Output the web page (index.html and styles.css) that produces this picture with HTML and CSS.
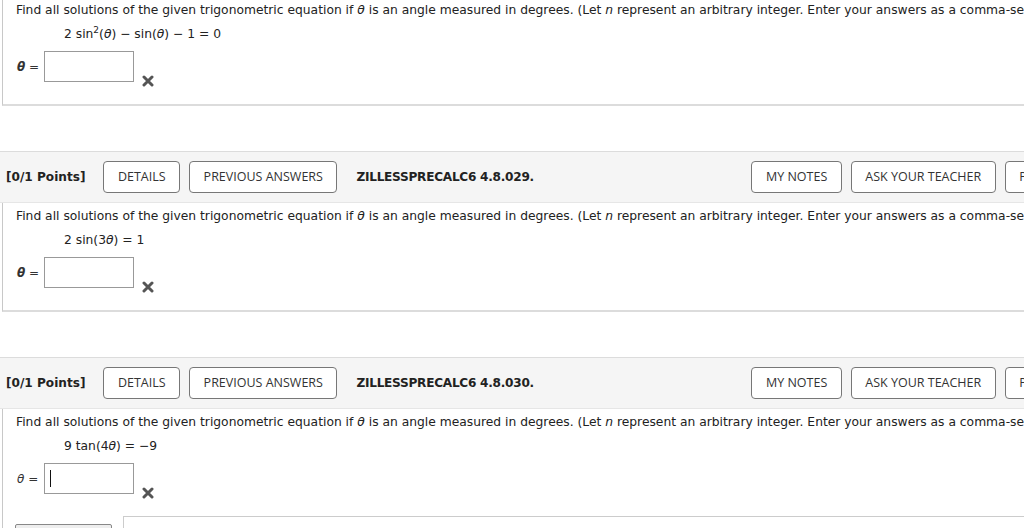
FILE: index.html
```html
<!DOCTYPE html>
<html lang="en">
<head>
<meta charset="utf-8">
<title>Questions</title>
<link rel="stylesheet" href="styles.css">
</head>
<body>
<div class="page">

  <section class="q q-first">
    <div class="qbody">
      <p class="prompt">Find all solutions of the given trigonometric equation if <i>θ</i> is an angle measured in degrees. (Let <i>n</i> represent an arbitrary integer. Enter your answers as a comma-separated list.)</p>
      <p class="eq">2 sin<sup>2</sup>(<i>θ</i>) − sin(<i>θ</i>) − 1 = 0</p>
      <div class="answer">
        <span class="lbl"><b><i>θ</i></b> =</span>
        <span class="box"></span>
        <svg class="wrong" viewBox="0 0 12 12" width="12" height="12"><path d="M2 2 L10 10 M10 2 L2 10" stroke="#555" stroke-width="3" stroke-linecap="round"/></svg>
      </div>
    </div>
  </section>

  <section class="q">
    <div class="qhead">
      <span class="pts">[0/1 Points]</span>
      <span class="btn">DETAILS</span>
      <span class="btn">PREVIOUS ANSWERS</span>
      <span class="qid">ZILLESSPRECALC6 4.8.029.</span>
      <span class="right">
        <span class="btn">MY NOTES</span>
        <span class="btn">ASK YOUR TEACHER</span>
        <span class="btn">PRACTICE ANOTHER</span>
      </span>
    </div>
    <div class="qbody">
      <p class="prompt">Find all solutions of the given trigonometric equation if <i>θ</i> is an angle measured in degrees. (Let <i>n</i> represent an arbitrary integer. Enter your answers as a comma-separated list.)</p>
      <p class="eq">2 sin(3<i>θ</i>) = 1</p>
      <div class="answer">
        <span class="lbl"><b><i>θ</i></b> =</span>
        <span class="box"></span>
        <svg class="wrong" viewBox="0 0 12 12" width="12" height="12"><path d="M2 2 L10 10 M10 2 L2 10" stroke="#555" stroke-width="3" stroke-linecap="round"/></svg>
      </div>
    </div>
  </section>

  <section class="q">
    <div class="qhead">
      <span class="pts">[0/1 Points]</span>
      <span class="btn">DETAILS</span>
      <span class="btn">PREVIOUS ANSWERS</span>
      <span class="qid">ZILLESSPRECALC6 4.8.030.</span>
      <span class="right">
        <span class="btn">MY NOTES</span>
        <span class="btn">ASK YOUR TEACHER</span>
        <span class="btn">PRACTICE ANOTHER</span>
      </span>
    </div>
    <div class="qbody">
      <p class="prompt">Find all solutions of the given trigonometric equation if <i>θ</i> is an angle measured in degrees. (Let <i>n</i> represent an arbitrary integer. Enter your answers as a comma-separated list.)</p>
      <p class="eq">9 tan(4<i>θ</i>) = −9</p>
      <div class="answer">
        <span class="lbl"><i>θ</i> =</span>
        <span class="box focus"><span class="caret"></span></span>
        <svg class="wrong" viewBox="0 0 12 12" width="12" height="12"><path d="M2 2 L10 10 M10 2 L2 10" stroke="#555" stroke-width="3" stroke-linecap="round"/></svg>
      </div>
      <div class="tools">
        <span class="tbtn"></span>
        <span class="tbox"></span>
      </div>
    </div>
  </section>

</div>
</body>
</html>
```

FILE: styles.css
```css
html, body {
  margin: 0;
  padding: 0;
  overflow: hidden;
  background: #fff;
}
body {
  font-family: "DejaVu Sans", Verdana, sans-serif;
  font-size: 12.3px;
  color: #222;
}
.page {
  width: 1159px;
}
.q {
  margin-bottom: 45px;
}
.q-first {
  margin-top: -3px;
}
.qhead {
  display: flex;
  align-items: center;
  gap: 9px;
  height: 50px;
  padding: 0 0 0 6px;
  background: #f5f5f5;
  border-top: 1px solid #dcdcdc;
  border-bottom: 1px solid #e6e6e6;
}
.pts {
  font-weight: bold;
  font-size: 12.1px;
  margin-right: 9px;
}
.qid {
  font-weight: bold;
  font-size: 12.1px;
  margin-left: 10px;
  letter-spacing: -0.25px;
}
.right {
  margin-left: auto;
  display: flex;
  gap: 9px;
  padding-right: 8px;
}
.btn {
  font-family: "Open Sans", sans-serif;
  font-size: 12.5px;
  color: #333;
  background: #fff;
  border: 1px solid #777;
  border-radius: 4px;
  height: 30px;
  line-height: 30px;
  padding: 0 13.5px;
  white-space: nowrap;
}
.qbody {
  margin-left: 2px;
  border-left: 1px solid #c8c8c8;
  border-bottom: 2px solid #dcdcdc;
  padding: 4px 0 22px 13px;
}
.prompt {
  margin: 0;
  line-height: 18px;
  white-space: nowrap;
}
.eq {
  margin: 6px 0 0 48px;
  line-height: 18px;
}
.eq sup {
  font-size: 9px;
  line-height: 0;
}
.answer {
  display: flex;
  align-items: center;
  margin-top: 8px;
  height: 31px;
}
.lbl {
  width: 27px;
  padding-left: 1px;
  font-size: 12px;
  color: #333;
}
.box {
  box-sizing: border-box;
  width: 90px;
  height: 31px;
  border: 1px solid #999;
  background: #fff;
  display: flex;
  align-items: center;
}
.caret {
  display: block;
  width: 1px;
  height: 17px;
  background: #111;
  margin-left: 5px;
}
.wrong {
  align-self: flex-end;
  margin: 0 0 -5px 8px;
}
.tools {
  display: flex;
  align-items: flex-start;
  gap: 11px;
  margin: 22px 0 0 -1px;
}
.tbtn {
  box-sizing: border-box;
  width: 97px;
  height: 22px;
  border: 1px solid #888;
  border-radius: 2px;
  background: #eee;
  margin-top: 8px;
}
.tbox {
  width: 900px;
  height: 40px;
  border: 1px solid #ccc;
}
```
